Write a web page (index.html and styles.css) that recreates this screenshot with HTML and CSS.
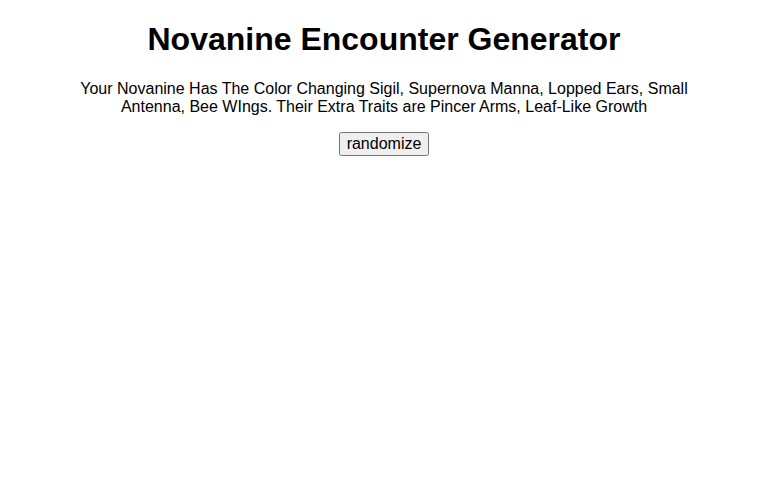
FILE: index.html
```html
<!DOCTYPE html>
<html>
<head>
<meta charset="utf-8">
<link rel="stylesheet" href="styles.css">
</head>
<body>
<div class="page">
<h1 class="title">Novanine Encounter Generator</h1>
<p class="desc">Your Novanine Has The Color Changing Sigil, Supernova Manna, Lopped Ears, Small Antenna, Bee WIngs. Their Extra Traits are Pincer Arms, Leaf-Like Growth</p>
<button class="btn">randomize</button>
</div>
</body>
</html>
```
FILE: styles.css
```css
body {
  margin: 0;
  font-family: "Liberation Sans", Arial, sans-serif;
  background: #fff;
  color: #000;
}
.page {
  text-align: center;
}
.title {
  font-size: 32px;
  margin: 21px 0 22px;
}
.desc {
  font-size: 16px;
  width: 620px;
  margin: 0 auto 16px;
  line-height: 18px;
}
.btn {
  font-family: "Liberation Sans", Arial, sans-serif;
  font-size: 16px;
}
```
